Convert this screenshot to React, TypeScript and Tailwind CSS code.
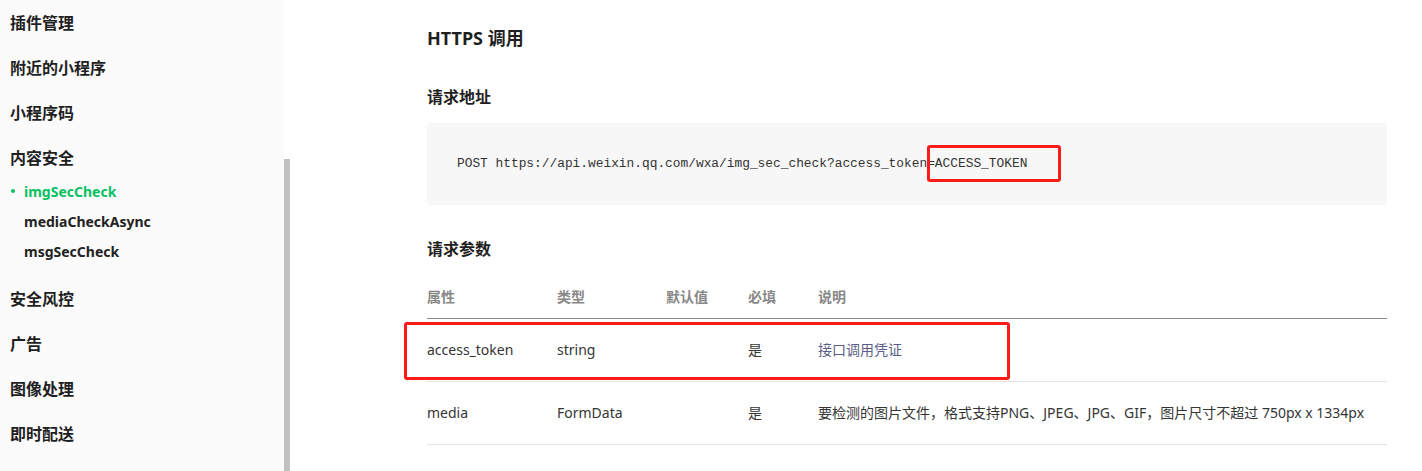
import React from 'react'

const font = { fontFamily: '"Noto Sans", "Noto Sans CJK SC", sans-serif' }

const sideTop = ['插件管理', '附近的小程序', '小程序码']
const sideBottom = ['安全风控', '广告', '图像处理', '即时配送']
const subItems = [
  { name: 'imgSecCheck', active: true },
  { name: 'mediaCheckAsync', active: false },
  { name: 'msgSecCheck', active: false },
]

const params = [
  { name: 'access_token', type: 'string', def: '', required: '是', desc: '接口调用凭证', link: true },
  {
    name: 'media',
    type: 'FormData',
    def: '',
    required: '是',
    desc: '要检测的图片文件，格式支持PNG、JPEG、JPG、GIF，图片尺寸不超过 750px x 1334px',
    link: false,
  },
]

function Sidebar() {
  return (
    <div className="flex h-full shrink-0">
      <div className="w-[284px] bg-[#fbfbfb] text-[#1f1f1f]">
        {sideTop.map((t) => (
          <div key={t} className="h-[45px] pl-[10px] flex items-center text-[16px] font-semibold">
            {t}
          </div>
        ))}
        {/* 当前分组 */}
        <div className="pl-[10px] pt-[12px] pb-[7px] leading-[22px] text-[16px] font-semibold">内容安全</div>
        <div className="pb-[10px]">
          {subItems.map((s) => (
            <div
              key={s.name}
              className={`relative h-[30px] pl-[24px] flex items-center text-[14px] font-bold ${
                s.active ? 'text-[#07c160]' : 'text-[#222]'
              }`}
            >
              {s.active && <span className="absolute left-[11px] top-[13px] w-[4px] h-[4px] rounded-full bg-[#07c160]" />}
              {s.name}
            </div>
          ))}
        </div>
        {sideBottom.map((t) => (
          <div key={t} className="h-[45px] pl-[10px] flex items-center text-[16px] font-semibold">
            {t}
          </div>
        ))}
      </div>
      {/* scrollbar */}
      <div className="w-[6px] pt-[159px] flex flex-col">
        <div className="flex-1 bg-[#c1c1c1]" />
      </div>
    </div>
  )
}

export default function App() {
  return (
    <div className="w-[1422px] h-[471px] overflow-hidden bg-white flex" style={font}>
      <Sidebar />

      <div className="pl-[137px] pt-[24px] w-[1097px]">
        <div className="w-[960px]">
          <h2 className="text-[18px] leading-[28px] font-bold text-[#1f1f1f]">HTTPS 调用</h2>

          <h3 className="mt-[33px] text-[16px] leading-[24px] font-bold text-[#1f1f1f]">请求地址</h3>

          <div className="relative mt-[14px] rounded-[4px] bg-[#f7f7f7] px-[30px] py-[31px]">
            <pre
              className="text-[12.85px] leading-[20px] text-[#333]"
              style={{ fontFamily: '"Liberation Mono", monospace' }}
            >
              POST https://api.weixin.qq.com/wxa/img_sec_check?access_token=ACCESS_TOKEN
            </pre>
            <div className="absolute left-[500px] top-[22px] w-[134px] h-[37px] border-[3px] border-[#ff1a1a] rounded-[3px]" />
          </div>

          <h3 className="mt-[32px] text-[16px] leading-[24px] font-bold text-[#1f1f1f]">请求参数</h3>

          <div className="relative mt-[15px]">
            <table className="w-full border-collapse text-[14px] leading-[22px]">
              <thead>
                <tr className="border-b border-[#8c8c8c] text-[#888] font-semibold text-left">
                  <th className="w-[130px] py-[10px] font-semibold">属性</th>
                  <th className="w-[109px] py-[10px] font-semibold">类型</th>
                  <th className="w-[82px] py-[10px] font-semibold">默认值</th>
                  <th className="w-[70px] py-[10px] font-semibold">必填</th>
                  <th className="py-[10px] font-semibold">说明</th>
                </tr>
              </thead>
              <tbody className="text-[#353535]">
                {params.map((p) => (
                  <tr key={p.name} className="border-b border-[#e5e5e5]">
                    <td className="h-[63px] align-middle">{p.name}</td>
                    <td className="align-middle">{p.type}</td>
                    <td className="align-middle">{p.def}</td>
                    <td className="align-middle">{p.required}</td>
                    <td className={`align-middle whitespace-nowrap ${p.link ? 'text-[#5b5d86]' : ''}`}>{p.desc}</td>
                  </tr>
                ))}
              </tbody>
            </table>
            <div className="absolute left-[-23px] top-[46px] w-[606px] h-[58px] border-[3px] border-[#ff1a1a] rounded-[3px]" />
          </div>
        </div>
      </div>
    </div>
  )
}
